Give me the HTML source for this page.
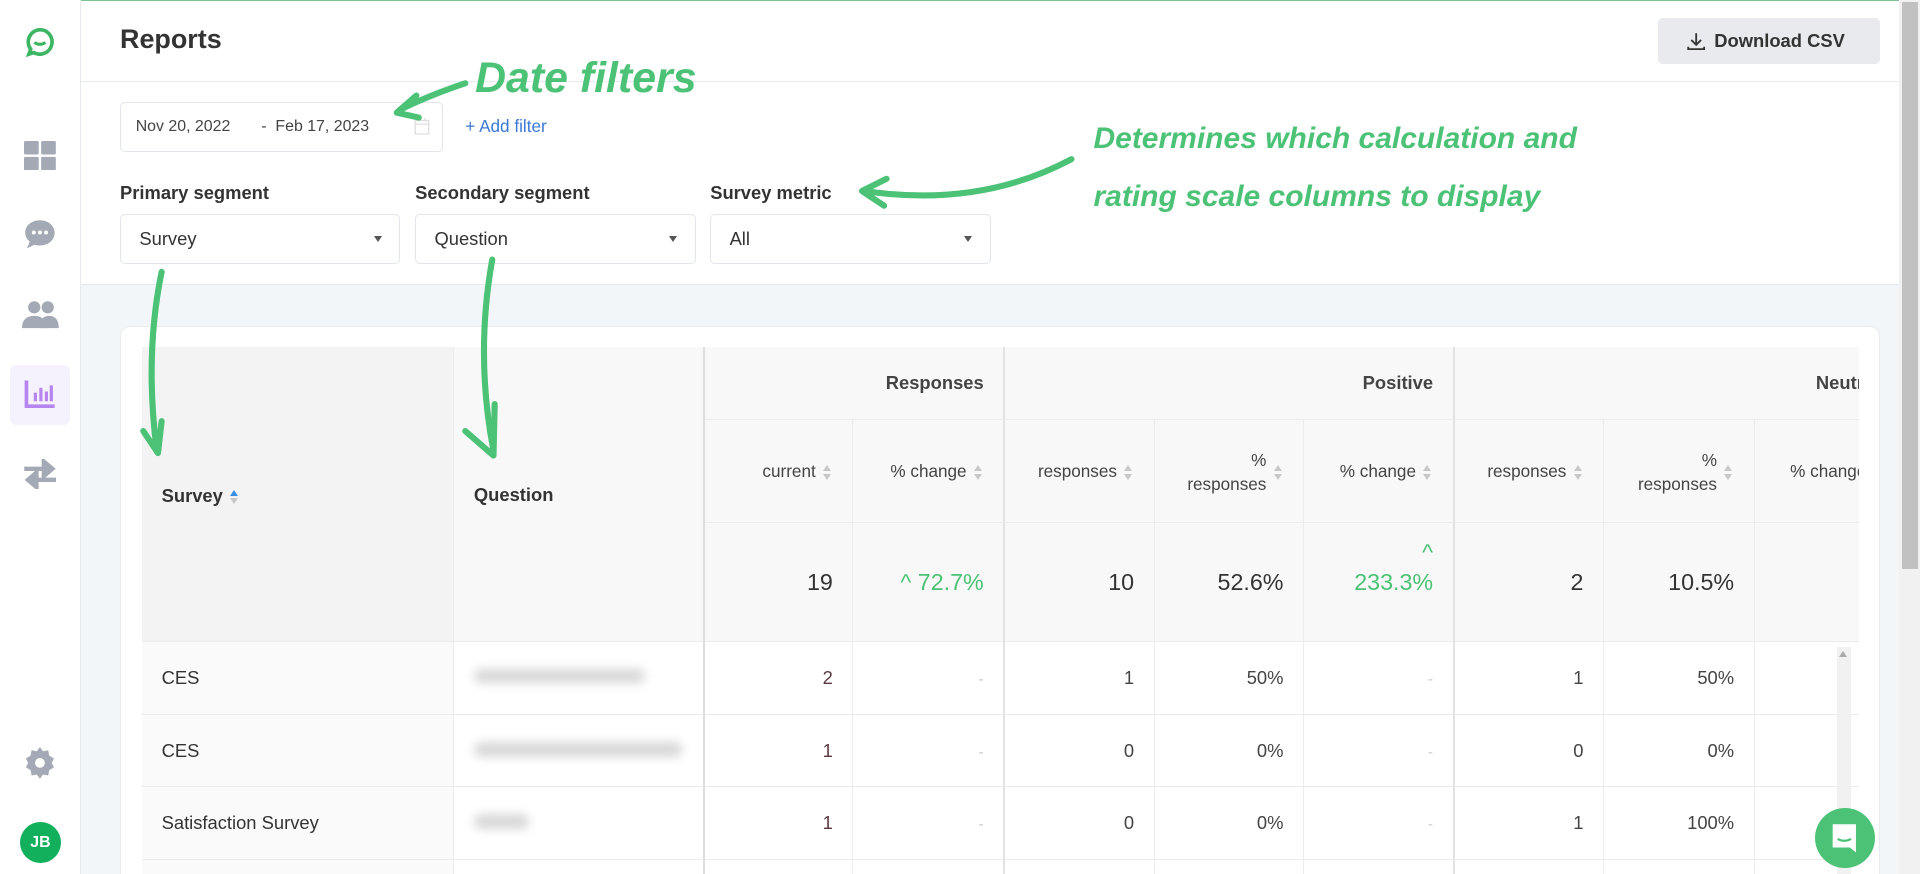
<!DOCTYPE html>
<html><head><meta charset="utf-8"><style>
*{box-sizing:border-box;margin:0;padding:0}
html,body{width:1920px;height:874px;overflow:hidden;background:#fff}
#w{zoom:1.22449;width:1568px;height:714px;position:relative;font-family:"Liberation Sans",sans-serif;color:#333;overflow:hidden}
.a{position:absolute}
.side{left:0;top:0;width:66px;height:714px;border-right:1px solid #e6e9ee;background:#fff}
.gray{background:#f3f6f9}
.sel{border:1px solid #e2e5ea;border-radius:4px;background:#fff;height:41px;font-size:15px;line-height:39px;padding-left:15px;color:#333}
.sel.dd:after{content:"";position:absolute;right:14px;top:17px;border:4px solid transparent;border-top:5px solid #555}
.lbl{font-size:15px;font-weight:bold;color:#333}
.hand{color:#4bc275;font-family:"Liberation Sans",sans-serif;font-style:italic;font-weight:bold;white-space:nowrap}
.c{position:absolute;border-right:1px solid #ececec;border-bottom:1px solid #ececec;font-size:14px;text-align:right;padding-right:16px;color:#444}
.s{display:inline-block;width:8px;margin-left:6px;vertical-align:middle;position:relative;height:12px}
.s:before{content:"";position:absolute;left:0;top:0;border:4px solid transparent;border-bottom:5px solid #c8c8c8;border-top:0}
.s:after{content:"";position:absolute;left:0;top:7px;border:4px solid transparent;border-top:5px solid #c8c8c8;border-bottom:0}
.s.blue:before{border-bottom-color:#3a8ee6}
</style></head><body><div id="w">
<div class="a" style="left:0;top:0;width:1568px;height:1px;background:#7dc491"></div>
<div class="a side"></div>
<svg class="a" style="left:20px;top:21px" width="26" height="26" viewBox="0 0 26 26"><path d="M13 3a10 10 0 1 1-5 18.7L4 23l1.5-4A10 10 0 0 1 13 3z" fill="none" stroke="#3cb663" stroke-width="3"/><path d="M8.5 13.5q4.5 3 9 0" fill="none" stroke="#3cb663" stroke-width="2.5"/></svg>
<svg class="a" style="left:20px;top:115px" width="26" height="24"><rect x="0" y="0" width="12" height="11" rx="1" fill="#a3aab5"/><rect x="14" y="0" width="12" height="11" rx="1" fill="#a3aab5"/><rect x="0" y="13" width="12" height="11" rx="1" fill="#a3aab5"/><rect x="14" y="13" width="12" height="11" rx="1" fill="#a3aab5"/></svg>
<svg class="a" style="left:20px;top:179px" width="26" height="26"><path d="M13 1C6 1 1 5.5 1 11c0 3 1.4 5.6 3.7 7.4L2.5 24l6-3c1.4.4 2.9.6 4.5.6 7 0 12-4.6 12-10.3S20 1 13 1z" fill="#a3aab5"/><circle cx="8" cy="11" r="1.6" fill="#fff"/><circle cx="13" cy="11" r="1.6" fill="#fff"/><circle cx="18" cy="11" r="1.6" fill="#fff"/></svg>
<svg class="a" style="left:18px;top:245px" width="30" height="24"><circle cx="10" cy="6" r="5" fill="#a3aab5"/><circle cx="21" cy="6" r="5" fill="#a3aab5"/><path d="M0 23c0-7 4-10 10-10s10 3 10 10z" fill="#a3aab5"/><path d="M14 23c0-6 3-10 8-10s8 3 8 10z" fill="#a3aab5"/></svg>
<div class="a" style="left:8px;top:298px;width:49px;height:49px;background:#f5f2fe;border-radius:5px"></div>
<svg class="a" style="left:20px;top:309px" width="26" height="26"><path d="M2 2v21h23" fill="none" stroke="#b685f0" stroke-width="3"/><rect x="8" y="12" width="2.6" height="7" fill="#b685f0"/><rect x="12.5" y="8" width="2.6" height="11" fill="#b685f0"/><rect x="17" y="11" width="2.6" height="8" fill="#b685f0"/><rect x="21" y="6" width="2.6" height="13" fill="#b685f0"/></svg>
<svg class="a" style="left:19px;top:375px" width="28" height="24"><path d="M1 8h20M17 2l7 6-7 6z" fill="#a3aab5" stroke="#a3aab5" stroke-width="3.5"/><path d="M27 17H7M11 11l-7 6 7 6z" fill="#a3aab5" stroke="#a3aab5" stroke-width="3.5"/></svg>
<svg class="a" style="left:20px;top:610px" width="26" height="26" viewBox="0 0 26 26"><path d="M13 0l2.5 3.5 4.3-.8.8 4.3L24.5 9.5 22.6 13l1.9 3.5-3.9 2.5-.8 4.3-4.3-.8L13 26l-2.5-3.5-4.3.8-.8-4.3L1.5 16.5 3.4 13 1.5 9.5 5.4 7l.8-4.3 4.3.8z" fill="#a3aab5"/><circle cx="13" cy="13" r="4" fill="#fff"/></svg>
<div class="a" style="left:16px;top:671px;width:34px;height:34px;border-radius:50%;background:#12b05c;color:#fff;font-size:13px;font-weight:bold;text-align:center;line-height:34px">JB</div>

<div class="a" style="left:98px;top:20px;font-size:22px;font-weight:bold;color:#333">Reports</div>
<div class="a" style="left:1354px;top:15px;width:181px;height:37px;background:#e8eaed;border-radius:4px;font-size:15px;font-weight:bold;line-height:37px;padding-left:46px;color:#333">Download CSV</div>
<svg class="a" style="left:1378px;top:26px" width="15" height="15"><path d="M7.5 1v9M3.5 6.5l4 4 4-4M1 12v2h13v-2" fill="none" stroke="#333" stroke-width="1.5"/></svg>
<div class="a" style="left:66px;top:66px;width:1485px;height:1px;background:#e6e9ee"></div>

<div class="a sel" style="left:98px;top:83px;width:264px;height:41px;font-size:13px;padding-left:12px;color:#444">Nov 20, 2022 &nbsp;&nbsp;&nbsp;&nbsp;&nbsp; - &nbsp;Feb 17, 2023</div>
<svg class="a" style="left:338px;top:96px" width="13" height="14"><rect x="1" y="2" width="11" height="11" fill="none" stroke="#ddd"/><path d="M1 5h11M4 0v3M9 0v3" stroke="#ddd"/></svg>
<div class="a" style="left:380px;top:95px;font-size:14px;color:#3a78d6">+ Add filter</div>

<div class="a lbl" style="left:98px;top:149px">Primary segment</div>
<div class="a lbl" style="left:339px;top:149px">Secondary segment</div>
<div class="a lbl" style="left:580px;top:149px">Survey metric</div>
<div class="a sel dd" style="left:98px;top:175px;width:229px">Survey</div>
<div class="a sel dd" style="left:339px;top:175px;width:229px">Question</div>
<div class="a sel dd" style="left:580px;top:175px;width:229px">All</div>

<div class="a gray" style="left:66px;top:232px;width:1485px;height:482px;border-top:1px solid #e6e9ee"></div>
<div class="a" style="left:98px;top:266px;width:1437px;height:460px;background:#fff;border-radius:8px;border:1px solid #e9ecef"></div>

<div class="a" style="left:116px;top:283px;width:1402px;height:431px;overflow:hidden">
<div style="position:relative;left:-116px;top:-283px">
<div class="c" style="left:116px;top:283px;width:255px;height:241px;background:#f3f3f3;text-align:left;padding:113px 0 0 16px;font-weight:bold;font-size:15px;color:#333">Survey<span class="s blue"></span></div>
<div class="c" style="left:371px;top:283px;width:205px;height:241px;background:#f8f8f8;text-align:left;padding:112px 0 0 16px;font-weight:bold;font-size:15px;color:#333;border-right:2px solid #ddd">Question</div>
<div class="c" style="left:576px;top:283px;width:245px;height:60px;background:#f8f8f8;font-weight:bold;font-size:15px;line-height:58px;border-right:2px solid #e2e2e2">Responses</div>
<div class="c" style="left:821px;top:283px;width:367px;height:60px;background:#f8f8f8;font-weight:bold;font-size:15px;line-height:58px;border-right:2px solid #e2e2e2">Positive</div>
<div class="c" style="left:1188px;top:283px;width:360px;height:60px;background:#f8f8f8;font-weight:bold;font-size:15px;line-height:58px;text-align:left;padding-left:295px">Neutral</div>
</div></div>
<div id="t" class="a" style="left:116px;top:283px;width:1402px;height:431px;overflow:hidden"></div>
<script>
var t=document.getElementById('t'),h='';
var xs=[576,697,821,943,1065,1188,1310,1433,1555];
var heads=['current','% change','responses','%<br>responses','% change','responses','%<br>responses','% change'];
var tot=['19','<span style="color:#4bc275">^ 72.7%</span>','10','52.6%','<span style="color:#4bc275;line-height:24px;display:inline-block;margin-top:-14px">^<br>233.3%</span>','2','10.5%',''];
var rows=[['2','-','1','50%','-','1','50%',''],['1','-','0','0%','-','0','0%',''],['1','-','0','0%','-','1','100%',''],['','','','','','','','']];
var ry=[524,584,643,702];
function cell(x,y,w,hh,bg,html,st){h+='<div class="c" style="left:'+(x-116)+'px;top:'+(y-283)+'px;width:'+w+'px;height:'+hh+'px;background:'+bg+';'+(st||'')+'">'+html+'</div>';}
for(var i=0;i<8;i++){var x=xs[i],w=xs[i+1]-x;var br=(i==1||i==4)?'border-right:2px solid #e2e2e2;':'';
 var two=heads[i].indexOf('<br>')>0;
 cell(x,343,w,84,'#f8f8f8',two?'<span style="display:inline-block;text-align:right;line-height:20px;vertical-align:middle">'+heads[i]+'</span><span class="s"></span>':heads[i]+'<span class="s"></span>',br+'line-height:84px');
 cell(x,427,w,97,'#f8f8f8',tot[i],br+'font-size:19px;line-height:97px;color:#333');
 for(var r=0;r<4;r++){var v=rows[r][i];cell(x,ry[r],w,(ry[r+1]||761)-ry[r],'#fff',v=='-'?'<span style="color:#ccc;font-size:13px">-</span>':v,br+'line-height:59px;font-size:15px;color:'+(i==0?'#5a3a40':'#444'));}
}
var names=['CES','CES','Satisfaction Survey',''];var bw=[140,170,45,0];
for(var r=0;r<4;r++){var hh=(ry[r+1]||761)-ry[r];
 cell(116,ry[r],255,hh,'#fafafa',names[r],'text-align:left;padding-left:16px;line-height:59px;font-size:15px;color:#333');
 cell(371,ry[r],205,hh,'#fff',bw[r]?'<div style="position:absolute;left:16px;top:22px;width:'+bw[r]+'px;height:12px;background:#d8d8d8;border-radius:6px;filter:blur(4px)"></div>':'','border-right:2px solid #ddd');}
t.innerHTML=h;
</script>
<div class="a" style="left:1500px;top:528px;width:12px;height:186px;background:#f1f1f1"></div>
<div class="a" style="left:1502px;top:532px;border:4px solid transparent;border-bottom:5px solid #aaa;border-top:0"></div>
<div class="a" style="left:1551px;top:0;width:17px;height:714px;background:#f1f1f1"></div>
<div class="a" style="left:1553px;top:2px;width:13px;height:463px;background:#c1c1c1"></div>
<div class="a" style="left:1482px;top:660px;width:49px;height:49px;border-radius:50%;background:#4bc275"></div>
<svg class="a" style="left:1494px;top:672px" width="25" height="26"><path d="M3 1h19v23l-5-4H3z" fill="#fff"/><path d="M7 13q5.5 3 11 0" fill="none" stroke="#4bc275" stroke-width="1.8"/></svg>

<div class="a hand" style="left:388px;top:44px;font-size:35px">Date filters</div>
<div class="a hand" style="left:893px;top:100px;font-size:24.5px">Determines which calculation and</div>
<div class="a hand" style="left:893px;top:147px;font-size:24.5px">rating scale columns to display</div>
<svg class="a" style="left:0;top:0" width="1568" height="714">
<g fill="none" stroke="#4bc275" stroke-width="5" stroke-linecap="round" stroke-linejoin="round">
<path d="M380 68 Q350 78 326 90"/><path d="M340 78 L324 92 L342 96"/>
<path d="M875 130 Q800 170 706 156"/><path d="M724 146 L704 156 L722 168"/>
<path d="M132 222 Q118 290 128 368"/><path d="M117 352 L129 370 L132 344"/>
<path d="M402 212 Q388 290 403 368"/><path d="M380 352 L403 372 L404 330"/>
</g></svg>
</div></body></html>
